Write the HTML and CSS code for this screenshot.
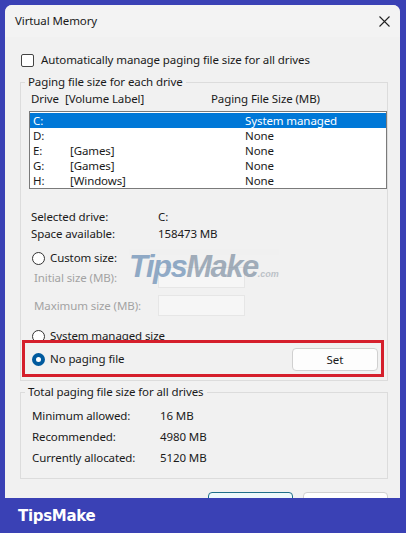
FILE: index.html
```html
<!DOCTYPE html>
<html>
<head>
<meta charset="utf-8">
<link rel="stylesheet" href="styles.css">
</head>
<body>
<div class="page">
  <div class="dialog">
    <div class="titlebar">
      <span class="title">Virtual Memory</span>
      <svg class="close" width="11" height="11" viewBox="0 0 11 11"><path d="M0.5 0.5L10.5 10.5M10.5 0.5L0.5 10.5" stroke="#222" stroke-width="1.1" fill="none"/></svg>
    </div>
    <div class="body">
      <div class="check-row"><span class="checkbox"></span><span>Automatically manage paging file size for all drives</span></div>

      <fieldset class="group group1">
        <legend>Paging file size for each drive</legend>
        <div class="list-head"><span class="h1">Drive</span><span class="h2">[Volume Label]</span><span class="h3">Paging File Size (MB)</span></div>
        <div class="listbox">
          <div class="row sel"><span class="c1">C:</span><span class="c2"></span><span class="c3">System managed</span></div>
          <div class="row"><span class="c1">D:</span><span class="c2"></span><span class="c3">None</span></div>
          <div class="row"><span class="c1">E:</span><span class="c2">[Games]</span><span class="c3">None</span></div>
          <div class="row"><span class="c1">G:</span><span class="c2">[Games]</span><span class="c3">None</span></div>
          <div class="row"><span class="c1">H:</span><span class="c2">[Windows]</span><span class="c3">None</span></div>
        </div>
        <div class="info">
          <div class="kv"><span class="k">Selected drive:</span><span>C:</span></div>
          <div class="kv"><span class="k">Space available:</span><span>158473 MB</span></div>
        </div>
        <div class="radio-row custom"><span class="radio"></span><span>Custom size:</span></div>
        <div class="field first"><span class="k dis">Initial size (MB):</span><span class="input"></span></div>
        <div class="field"><span class="k dis">Maximum size (MB):</span><span class="input"></span></div>
        <div class="radio-row sysman"><span class="radio"></span><span>System managed size</span></div>
        <div class="redbox">
          <div class="radio-row"><span class="radio on"></span><span>No paging file</span></div>
          <button class="btn set">Set</button>
        </div>
      </fieldset>

      <fieldset class="group group2">
        <legend>Total paging file size for all drives</legend>
        <div class="kv2 first"><span class="k2">Minimum allowed:</span><span>16 MB</span></div>
        <div class="kv2"><span class="k2">Recommended:</span><span>4980 MB</span></div>
        <div class="kv2"><span class="k2">Currently allocated:</span><span>5120 MB</span></div>
      </fieldset>

      <div class="buttons"><span class="btn ok"></span><span class="btn cancel"></span></div>
    </div>
    <div class="watermark"><span class="wm-tips">Tips</span><span class="wm-make">Make</span><span class="wm-com">.com</span></div>
  </div>
  <div class="bar">TipsMake</div>
</div>
</body>
</html>
```

FILE: styles.css
```css
html, body {
  margin: 0;
  padding: 0;
}
body {
  width: 406px;
  height: 533px;
  overflow: hidden;
  font-family: "Noto Sans", "Open Sans", sans-serif;
  font-size: 11.5px;
  letter-spacing: -0.1px;
  color: #1a1a1a;
}
.page {
  width: 406px;
  height: 533px;
  background: #3a41b5;
  display: flex;
  flex-direction: column;
}
.dialog {
  position: relative;
  margin: 5px 6px 0 5px;
  height: 493px;
  background: #f1f1f1;
  border-radius: 7px 7px 0 0;
  overflow: hidden;
}
.titlebar {
  height: 32px;
  display: flex;
  align-items: center;
  justify-content: space-between;
  padding: 0 10px 0 10px;
  background: #f3f3f3;
}
.title {
  line-height: 14px;
}
.close {
  display: block;
}
.body {
  padding: 0 12px 0 15px;
}
.check-row {
  margin-top: 15px;
  height: 16px;
  display: flex;
  align-items: center;
  gap: 7px;
  line-height: 16px;
}
.checkbox {
  margin-left: 1px;
  border: 1px solid #444;
  border-radius: 2px;
  background: #fff;
  box-sizing: border-box;
  width: 13px;
  height: 13px;
}
.group {
  margin: 7px 0 0 0;
  padding: 0;
  border: 1px solid #dcdcdc;
  min-width: 0;
}
.group legend {
  margin-left: 4px;
  padding: 0 3px;
  line-height: 14px;
}
.list-head {
  margin-top: 3px;
  display: flex;
  line-height: 14px;
  padding-left: 10px;
}
.h1 { width: 34px; }
.h2 { width: 146px; }
.listbox {
  margin: 5px 0 0 8px;
  border: 1px solid #7a7a7a;
  background: #fff;
  padding-top: 1px;
  height: 75px;
}
.row {
  height: 15px;
  line-height: 15px;
  display: flex;
  padding-left: 3px;
}
.row.sel {
  background: #0078d7;
  color: #fff;
}
.c1 { width: 37px; }
.c2 { width: 175px; }
.info {
  margin-top: 19px;
  padding-left: 10px;
}
.kv {
  display: flex;
  height: 17px;
  line-height: 17px;
}
.k {
  width: 127px;
}
.radio-row {
  display: flex;
  align-items: center;
  gap: 5px;
  height: 16px;
  line-height: 16px;
  padding-left: 11px;
}
.radio {
  width: 13px;
  height: 13px;
  box-sizing: border-box;
  border: 1px solid #333;
  border-radius: 50%;
  background: #fff;
}
.radio.on {
  border: 4px solid #005a9e;
  background: #fff;
}
.custom {
  margin-top: 8px;
}
.field {
  display: flex;
  align-items: center;
  height: 22px;
  padding-left: 13px;
  margin-top: 6px;
}
.field.first { margin-top: 0; }
.field .k {
  width: 124px;
}
.dis {
  color: #a3a3a3;
}
.input {
  width: 87px;
  height: 21px;
  box-sizing: border-box;
  border: 1px solid #e6e6e6;
  background: #f6f6f6;
}
.sysman {
  margin-top: 12px;
}
.redbox {
  position: relative;
  margin: -4px 3px 3px 1px;
  height: 37px;
  box-sizing: border-box;
  border: 3px solid #d51f2c;
  display: flex;
  align-items: center;
  justify-content: space-between;
  padding: 0 3px 0 6px;
}
.redbox .radio-row {
  padding-left: 1px;
  margin-top: 1px;
}
.btn {
  font-family: inherit;
  font-size: 11.5px;
  color: #1a1a1a;
  box-sizing: border-box;
  background: #fdfdfd;
  border: 1px solid #d0d0d0;
  border-radius: 4px;
}
.set {
  width: 86px;
  height: 23px;
  padding: 0;
  margin-top: 1px;
}
.group2 {
  margin-top: 4px;
  padding-bottom: 10px;
}
.kv2 {
  display: flex;
  height: 21px;
  line-height: 21px;
  padding-left: 11px;
}
.kv2.first { margin-top: 6px; }
.k2 {
  width: 128px;
}
.buttons {
  display: flex;
  justify-content: flex-end;
  gap: 10px;
  margin-top: 13px;
}
.buttons .btn {
  display: block;
  width: 85px;
  height: 24px;
}
.ok {
  background: #eef9fc;
  border-color: #1f6f8a;
}
.cancel {
  background: #fff;
}
.watermark {
  position: absolute;
  left: 124px;
  top: 244px;
  font-family: "Liberation Sans", Arial, sans-serif;
  font-weight: bold;
  font-style: italic;
  font-size: 31px;
  letter-spacing: -1.5px;
  line-height: 36px;
  opacity: 0.6;
  white-space: nowrap;
}
.wm-tips { color: #4f7aa8; }
.wm-make { color: #6c7f95; }
.wm-com { color: #9aa3ad; font-size: 9px; letter-spacing: 0; }
.bar {
  height: 35px;
  display: flex;
  align-items: center;
  padding-left: 18px;
  color: #fff;
  font-family: "DejaVu Sans", Verdana, sans-serif;
  font-weight: bold;
  font-size: 15px;
  letter-spacing: -0.3px;
}
```
